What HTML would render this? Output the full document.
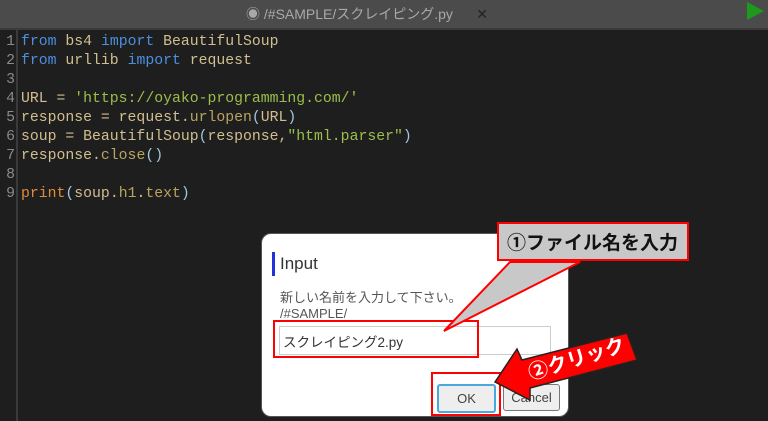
<!DOCTYPE html>
<html><head><meta charset="utf-8"><style>
body{margin:0;width:768px;height:421px;overflow:hidden;background:#1e1e1e;position:relative;font-family:"Liberation Sans","Noto Sans CJK JP",sans-serif}
.title{position:absolute;left:0;top:0;width:768px;height:28px;background:#4b4b4b;border-bottom:2px solid #3a3a3a}
.ttl{position:absolute;left:246px;top:4px;font-size:14px;color:#a8a8a8}
.code{position:absolute;left:0;top:33px;font-family:"Liberation Mono",monospace;font-size:14.8px;line-height:19px;white-space:pre;color:#d2bf90}
.ln{position:absolute;left:0;top:33px;width:15px;text-align:right;font-family:"Liberation Mono",monospace;font-size:14.8px;line-height:19px;color:#8a8a8a;white-space:pre}
.gut{position:absolute;left:16px;top:30px;width:2px;height:391px;background:#3a3a3a}
.k{color:#4b8fe0}.s{color:#9bbf4a}.f{color:#b8a460}.o{color:#e08a3c}.p{color:#a0c8e0}
</style></head><body>
<div class="title"><span class="ttl">◉ /#SAMPLE/スクレイピング.py &nbsp;&nbsp;&nbsp;&nbsp;&nbsp;<span style="color:#222">✕</span></span>
<svg style="position:absolute;left:745px;top:1px" width="20" height="20"><polygon points="2,1 19,10 2,19" fill="#1d9a1d"/></svg></div>
<div class="gut"></div>
<div class="ln">1
2
3
4
5
6
7
8
9</div>
<div class="code" style="left:21px"><span class="k">from</span> bs4 <span class="k">import</span> BeautifulSoup
<span class="k">from</span> urllib <span class="k">import</span> request

URL = <span class="s">'https://oyako-programming.com/'</span>
response = request.<span class="f">urlopen</span><span class="p">(</span>URL<span class="p">)</span>
soup = BeautifulSoup<span class="p">(</span>response,<span class="s">"html.parser"</span><span class="p">)</span>
response.<span class="f">close</span><span class="p">()</span>

<span class="o">print</span><span class="p">(</span>soup.<span class="f">h1</span>.<span class="f">text</span><span class="p">)</span></div>

<div style="position:absolute;left:261px;top:233px;width:306px;height:182px;background:#fff;border-radius:10px;border:1px solid #555"></div>
<div style="position:absolute;left:272px;top:252px;width:3px;height:24px;background:#2233dd"></div>
<div style="position:absolute;left:280px;top:254px;font-size:17px;color:#333">Input</div>
<div style="position:absolute;left:280px;top:287px;font-size:13px;color:#555">新しい名前を入力して下さい。</div>
<div style="position:absolute;left:280px;top:306px;font-size:13px;color:#555">/#SAMPLE/</div>
<div style="position:absolute;left:279px;top:326px;width:270px;height:27px;border:1px solid #ccc;background:#fff"></div>
<div style="position:absolute;left:283px;top:331px;font-size:13.5px;color:#333">スクレイピング2.py</div>
<div style="position:absolute;left:273px;top:320px;width:202px;height:34px;border:2px solid #f00"></div>
<div style="position:absolute;left:437px;top:384px;width:55px;height:25px;border:2px solid #4aa8e0;border-radius:3px;background:#eee;font-size:13px;color:#444;text-align:center;line-height:25px">OK</div>
<div style="position:absolute;left:503px;top:384px;width:55px;height:25px;border:1px solid #777;border-radius:3px;background:#eee;font-size:13px;color:#444;text-align:center;line-height:26px">Cancel</div>
<div style="position:absolute;left:431px;top:372px;width:66px;height:40px;border:2px solid #f00"></div>

<svg style="position:absolute;left:0;top:0" width="768" height="421">
<polygon points="510,262 580,262 444,331" fill="#c8c8c8" stroke="#f00" stroke-width="2"/>
<polygon points="495,382 517,349 522,360 627,333 637,360 530,388 530,400" fill="#f00" stroke="#222" stroke-width="1.5"/>
</svg>
<div style="position:absolute;left:497px;top:222px;width:192px;height:39px;background:#c8c8c8;border:2px solid #f00;font-size:19px;font-weight:bold;color:#111;line-height:39px;padding-left:8px;box-sizing:border-box">①ファイル名を入力</div>
<div style="position:absolute;left:524px;top:358px;font-size:20px;font-weight:bold;color:#fff;transform:rotate(-17deg);transform-origin:left top;white-space:nowrap">②クリック</div>
</body></html>
